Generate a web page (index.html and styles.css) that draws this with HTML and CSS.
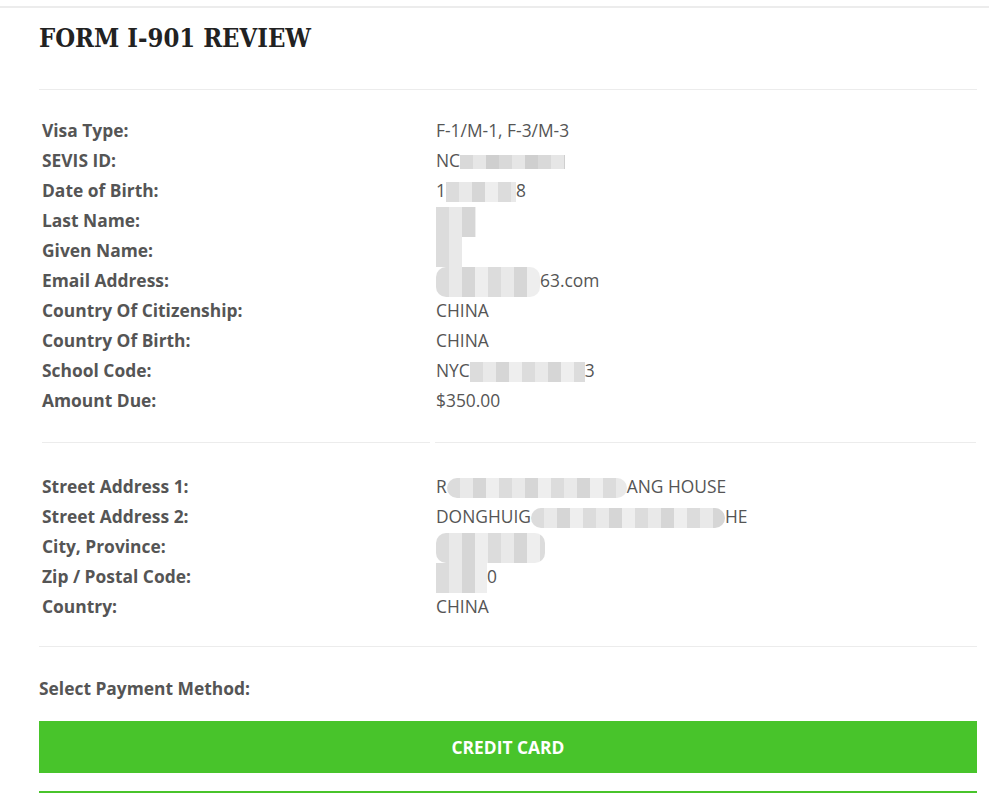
FILE: index.html
```html
<!DOCTYPE html>
<html>
<head>
    <meta charset="utf-8">
    <title>Form I-901 Review</title>
    <link rel="stylesheet" href="styles.css">
</head>
<body>
    <div class="topbar"></div>
    <div class="page">
        <h1 class="pageTitle">FORM I-901 REVIEW</h1>

        <div class="reviewSection first">
            <div class="labelCol">
                <p>Visa Type:</p>
                <p>SEVIS ID:</p>
                <p>Date of Birth:</p>
                <p>Last Name:</p>
                <p>Given Name:</p>
                <p>Email Address:</p>
                <p>Country Of Citizenship:</p>
                <p>Country Of Birth:</p>
                <p>School Code:</p>
                <p>Amount Due:</p>
            </div>
            <div class="valueCol">
                <p>F-1/M-1, F-3/M-3</p>
                <p>NC<span class="masked light" style="width:105px"></span></p>
                <p>1<span class="masked" style="width:70px"></span>8</p>
                <p><span class="masked tall" style="width:40px"></span></p>
                <p><span class="masked tall" style="width:26px"></span></p>
                <p><span class="masked tall round" style="width:104px"></span>63.com</p>
                <p>CHINA</p>
                <p>CHINA</p>
                <p>NYC<span class="masked" style="width:115px"></span>3</p>
                <p>$350.00</p>
            </div>
        </div>

        <div class="reviewSection last">
            <div class="labelCol">
                <p>Street Address 1:</p>
                <p>Street Address 2:</p>
                <p>City, Province:</p>
                <p>Zip / Postal Code:</p>
                <p>Country:</p>
            </div>
            <div class="valueCol">
                <p>R<span class="masked round" style="width:180px"></span>ANG HOUSE</p>
                <p>DONGHUIG<span class="masked round" style="width:194px"></span>HE</p>
                <p><span class="masked tall round" style="width:109px"></span></p>
                <p><span class="masked tall" style="width:51px"></span>0</p>
                <p>CHINA</p>
            </div>
        </div>

        <div class="payment">
            <p class="paymentLabel">Select Payment Method:</p>
            <button class="payButton">CREDIT CARD</button>
            <div class="payRule"></div>
        </div>
    </div>
</body>
</html>
```

FILE: styles.css
```css
body
{
    margin: 0;
    background-color: white;
    font-family: "Open Sans", "Liberation Sans", sans-serif;
    color: #555;
}
p
{
    margin: 0;
}
.topbar
{
    height: 6px;
    border-bottom: 2px solid #ececec;
}
.page
{
    margin-left: 39px;
    width: 938px;
}
.pageTitle
{
    margin: 0;
    padding: 14px 0 35px 0;
    font-family: "DejaVu Serif Condensed", "DejaVu Serif", "Liberation Serif", serif;
    font-size: 25.4px;
    font-weight: bold;
    color: #222;
    line-height: 32px;
    border-bottom: 1px solid #ececec;
}
.reviewSection
{
    display: flex;
    padding-top: 28px;
}
.reviewSection.first
{
    padding-top: 25px;
}
.labelCol
{
    width: 388px;
    margin-left: 3px;
    padding-bottom: 27px;
    border-bottom: 1px solid #ececec;
}
.valueCol
{
    flex: 1;
    margin-left: 5px;
    margin-right: 1px;
    padding-left: 1px;
    padding-bottom: 27px;
    border-bottom: 1px solid #ececec;
}
.reviewSection.last .labelCol,
.reviewSection.last .valueCol
{
    padding-bottom: 25px;
    border-bottom: none;
}
.labelCol p,
.valueCol p
{
    height: 30px;
    line-height: 30px;
    font-size: 17.4px;
    white-space: nowrap;
}
.labelCol p
{
    font-weight: bold;
}
.masked
{
    display: inline-block;
    vertical-align: middle;
    height: 20px;
    background: repeating-linear-gradient(90deg, #dcdcdc 0 13px, #e9e9e9 13px 26px, #d6d6d6 26px 39px, #eeeeee 39px 52px);
}
.masked.light
{
    height: 14px;
    background: repeating-linear-gradient(90deg, #d9d9d9 0 13px, #e6e6e6 13px 26px, #cfcfcf 26px 39px);
}
.masked.tall
{
    height: 30px;
}
.masked.round
{
    border-radius: 10px;
}
.payment
{
    border-top: 1px solid #ececec;
}
.paymentLabel
{
    padding-top: 30px;
    line-height: 22px;
    font-size: 17.4px;
    font-weight: bold;
}
.payButton
{
    display: block;
    width: 100%;
    height: 52px;
    margin-top: 22px;
    border: none;
    background-color: #48c42b;
    color: white;
    font-family: "Open Sans", "Liberation Sans", sans-serif;
    font-size: 17.4px;
    font-weight: bold;
}
.payRule
{
    margin-top: 18px;
    border-bottom: 2px solid #48c42b;
}
```
